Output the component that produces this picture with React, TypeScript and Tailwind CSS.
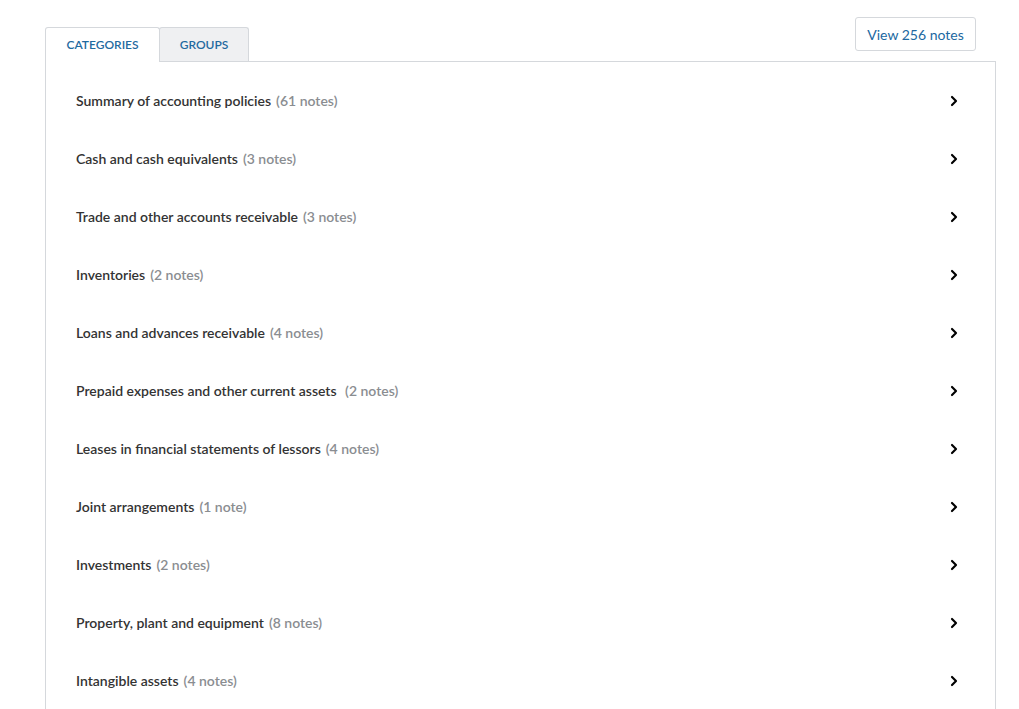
import { ChevronRight } from "lucide-react";

type Category = { name: string; count: string };

const categories: Category[] = [
  { name: "Summary of accounting policies", count: "61 notes" },
  { name: "Cash and cash equivalents", count: "3 notes" },
  { name: "Trade and other accounts receivable", count: "3 notes" },
  { name: "Inventories", count: "2 notes" },
  { name: "Loans and advances receivable", count: "4 notes" },
  { name: "Prepaid expenses and other current assets ", count: "2 notes" },
  { name: "Leases in financial statements of lessors", count: "4 notes" },
  { name: "Joint arrangements", count: "1 note" },
  { name: "Investments", count: "2 notes" },
  { name: "Property, plant and equipment", count: "8 notes" },
  { name: "Intangible assets", count: "4 notes" },
];

export default function App() {
  return (
    <div className="min-h-screen bg-white font-['Lato','Liberation_Sans',sans-serif] text-[#333]">
      <div className="ml-[45px] mr-[23px] pt-[17px]">
        <div className="flex items-end justify-between">
          <div className="flex items-start pt-[10px]">
            <button className="relative -mb-px h-[35px] w-[115px] rounded-t-[3px] border border-b-0 border-[#d5d8dc] bg-white text-[12px] font-semibold text-[#1f6aa0]">
              CATEGORIES
            </button>
            <button className="-ml-px h-[34px] w-[90px] rounded-t-[3px] border border-b-0 border-[#d5d8dc] bg-[#eff0f2] text-[12px] font-semibold text-[#1f6aa0]">
              GROUPS
            </button>
          </div>
          <button className="mb-[10px] mr-[20px] h-[34px] w-[121px] rounded-[3px] border border-[#d5d8dc] bg-white text-[14px] text-[#2168a1]">
            View 256 notes
          </button>
        </div>
        <div className="border border-[#d5d8dc] pt-[9px]">
          {categories.map((c) => (
            <div key={c.name} className="flex h-[58px] items-center justify-between pl-[30px] pr-[33px]">
              <div className="whitespace-pre text-[14px] font-semibold">
                <span className="text-[#333]">{c.name}</span>
                <span className="ml-[5px] text-[#8a8d91]">({c.count})</span>
              </div>
              <ChevronRight className="mt-[2px] h-[16px] w-[16px] text-black" strokeWidth={3.2} />
            </div>
          ))}
        </div>
      </div>
    </div>
  );
}
